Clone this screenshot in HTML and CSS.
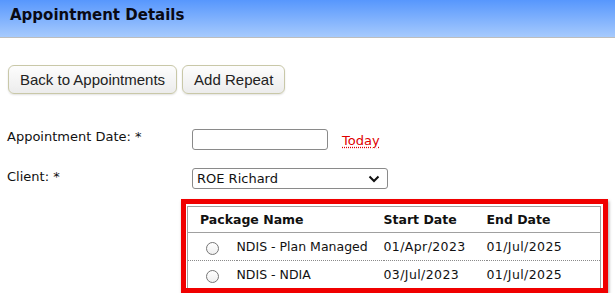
FILE: index.html
```html
<!DOCTYPE html>
<html>
<head>
<meta charset="utf-8">
<link rel="stylesheet" href="styles.css">
</head>
<body>
<div class="titlebar"><h1 class="title">Appointment Details</h1></div>
<div class="content">
  <div class="actions">
    <button class="btn">Back to Appointments</button>
    <button class="btn">Add Repeat</button>
  </div>
  <div class="form">
    <div class="row row-date">
      <label class="label">Appointment Date: *</label>
      <div class="field">
        <input class="input" type="text">
        <a class="today">Today</a>
      </div>
    </div>
    <div class="row row-client">
      <label class="label">Client: *</label>
      <div class="field">
        <div class="select"><span>ROE Richard</span>
          <svg class="chev" width="12" height="8" viewBox="0 0 12 8"><path d="M1.5 1.5 L6 6 L10.5 1.5" fill="none" stroke="#111" stroke-width="2"/></svg>
        </div>
      </div>
    </div>
  </div>
  <div class="packages">
    <div class="pkgbox">
      <table class="pkgtable">
        <thead>
          <tr><th colspan="2" class="c-name">Package Name</th><th class="c-start">Start Date</th><th class="c-end">End Date</th></tr>
        </thead>
        <tbody>
          <tr class="r1"><td class="c-radio"><span class="radio"></span></td><td class="c-pkg">NDIS - Plan Managed</td><td class="date">01/Apr/2023</td><td class="date">01/Jul/2025</td></tr>
          <tr class="r2"><td class="c-radio"><span class="radio"></span></td><td class="c-pkg">NDIS - NDIA</td><td class="date">03/Jul/2023</td><td class="date">01/Jul/2025</td></tr>
        </tbody>
      </table>
    </div>
  </div>
</div>
</body>
</html>
```

FILE: styles.css
```css
* { box-sizing: border-box; }
body {
  margin: 0;
  background: #fff;
  font-family: "DejaVu Sans", Tahoma, sans-serif;
  font-size: 12px;
  color: #111;
}
.titlebar {
  height: 38px;
  background: linear-gradient(to bottom, #5797fd 0%, #a6cafd 100%);
  border-bottom: 1px solid #bdbdbd;
  padding: 6px 0 0 10px;
}
.title {
  margin: 0;
  font-size: 15px;
  font-weight: bold;
  color: #0a0a14;
}
.content {
  padding: 27px 0 0 8px;
}
.actions {
  display: flex;
  gap: 5px;
}
.btn {
  height: 29px;
  padding: 0 11px;
  font-family: "Liberation Sans", Arial, sans-serif;
  font-size: 15px;
  color: #222;
  background: linear-gradient(to bottom, #fdfdfd 0%, #ececec 100%);
  border: 1px solid #c9c8a8;
  border-radius: 6px;
  box-shadow: 0 1px 2px rgba(0,0,0,0.12);
}
.form {
  margin-top: 35px;
}
.row {
  display: flex;
  align-items: center;
}
.label {
  width: 185px;
  font-size: 13px;
  margin-left: -1px;
}
.row-date .label { margin-top: -6px; }
.row-client { margin-top: 18px; }
.row-client .label { margin-top: -4px; }
.field {
  display: flex;
  align-items: center;
}
.input {
  width: 136px;
  height: 21px;
  border: 1px solid #8a8a8a;
  border-radius: 3px;
  margin: 0;
}
.today {
  margin-left: 14px;
  margin-top: 2px;
  color: #e00000;
  font-size: 13px;
  text-decoration: underline dotted #e00000;
  text-underline-offset: 2px;
}
.select {
  width: 196px;
  height: 21px;
  border: 1px solid #8a8a8a;
  border-radius: 3px;
  display: flex;
  align-items: center;
  justify-content: space-between;
  padding: 0 7px 0 4px;
  font-size: 13px;
}
.packages {
  margin-top: 10px;
  margin-left: 173px;
}
.pkgbox {
  width: 427px;
  height: 94px;
  border: 5px solid #f00000;
  padding: 2px 2px 0 1px;
  box-shadow: 1px 2px 3px rgba(0,0,0,0.35);
  overflow: hidden;
}
.pkgtable {
  width: 100%;
  border-collapse: collapse;
  border: 1px solid #a0a0a0;
  border-bottom: none;
  font-size: 12.5px;
}
.pkgtable th {
  text-align: left;
  font-weight: bold;
  height: 26px;
  padding: 0;
  border-bottom: 1px solid #a0a0a0;
}
.pkgtable th.c-name { padding-left: 12px; }
.pkgtable td {
  padding: 0;
  height: 28px;
}
.pkgtable td.date { letter-spacing: 0.4px; }
.r1 td { border-bottom: 1px dotted #8a8a8a; }
.c-radio { width: 49px; padding-left: 18px !important; }
.c-start { width: 103px; }
.radio {
  display: block;
  width: 13px;
  height: 13px;
  margin-top: 3px;
  border: 1px solid #767676;
  border-radius: 50%;
  background: linear-gradient(to bottom, #fff, #efefef);
}
.c-pkg { width: 147px; }
```
